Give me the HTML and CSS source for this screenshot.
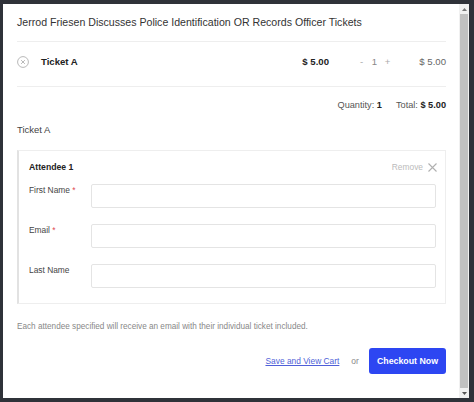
FILE: index.html
```html
<!DOCTYPE html>
<html>
<head>
<meta charset="utf-8">
<link rel="stylesheet" href="styles.css">
</head>
<body>
<div class="frame">
  <div class="modal">
    <div class="content">
      <h1 class="title">Jerrod Friesen Discusses Police Identification OR Records Officer Tickets</h1>
      <div class="ticket-row">
        <span class="rm-icon">
          <svg width="12" height="12" viewBox="0 0 12 12"><circle cx="6" cy="6" r="5.4" fill="none" stroke="#b8b8b8" stroke-width="1"/><path d="M4.1 4.1 L7.9 7.9 M7.9 4.1 L4.1 7.9" stroke="#b0b0b0" stroke-width="0.9" fill="none"/></svg>
        </span>
        <span class="name">Ticket A</span>
        <span class="price">$ 5.00</span>
        <span class="qty"><span class="qbtn">-</span><span class="qnum">1</span><span class="qbtn">+</span></span>
        <span class="sub">$ 5.00</span>
      </div>
      <div class="summary"><span>Quantity: <b>1</b></span><span>Total: <b>$ 5.00</b></span></div>
      <div class="section-title">Ticket A</div>
      <div class="attendee">
        <div class="att-head">
          <b class="att-title">Attendee 1</b>
          <span class="remove">Remove
            <svg width="9" height="9" viewBox="0 0 9 9"><path d="M0.5 0.5 L8.5 8.5 M8.5 0.5 L0.5 8.5" stroke="#b0b0b0" stroke-width="1.1" fill="none"/></svg>
          </span>
        </div>
        <div class="field"><label class="lbl">First Name <span class="req">*</span></label><input class="inp" type="text"></div>
        <div class="field"><label class="lbl">Email <span class="req">*</span></label><input class="inp" type="text"></div>
        <div class="field"><label class="lbl">Last Name</label><input class="inp" type="text"></div>
      </div>
      <p class="note">Each attendee specified will receive an email with their individual ticket included.</p>
      <div class="actions">
        <a class="cart-link" href="#">Save and View Cart</a>
        <span class="or">or</span>
        <button class="checkout">Checkout Now</button>
      </div>
    </div>
    <div class="scrollbar">
      <div class="sb-arrow"><svg width="5" height="3" viewBox="0 0 5 3"><path d="M0 3 L2.5 0 L5 3 Z" fill="#777"/></svg></div>
      <div class="sb-thumb"></div>
      <div class="sb-arrow"><svg width="5" height="3" viewBox="0 0 5 3"><path d="M0 0 L2.5 3 L5 0 Z" fill="#555"/></svg></div>
    </div>
  </div>
</div>
</body>
</html>
```

FILE: styles.css
```css
* { box-sizing: border-box; }
html, body { margin: 0; padding: 0; }
body {
  background: #2f3239;
  font-family: "Liberation Sans", Arial, sans-serif;
  color: #333;
}
.frame {
  height: 402px;
  padding: 4px 5px 4px 3px;
}
.modal {
  display: flex;
  height: 394px;
  background: #fff;
}
.content {
  flex: 1;
  padding: 10px 13px 0 14px;
}
.title {
  margin: 0 0 11px;
  font-size: 10.6px;
  line-height: 16px;
  font-weight: normal;
  color: #333;
}
.ticket-row {
  display: flex;
  align-items: center;
  border-top: 1px solid #eee;
  border-bottom: 1px solid #eee;
  padding: 12px 0 16px;
  font-size: 9.6px;
  line-height: 16px;
}
.rm-icon {
  width: 24px;
  display: flex;
  align-items: center;
}
.name {
  flex: 1;
  font-weight: bold;
  color: #222;
}
.price {
  font-weight: bold;
  color: #222;
}
.qty {
  display: flex;
  margin-left: 26px;
  color: #999;
}
.qty span {
  width: 13px;
  text-align: center;
}
.qbtn { color: #aaa; }
.qnum { color: #888; }
.sub {
  width: 52px;
  text-align: right;
  color: #666;
}
.summary {
  display: flex;
  justify-content: flex-end;
  gap: 14px;
  margin-top: 11px;
  font-size: 9.2px;
  line-height: 14px;
  color: #555;
}
.summary b { color: #222; }
.section-title {
  margin-top: 11px;
  font-size: 9.5px;
  line-height: 14px;
  color: #444;
}
.attendee {
  margin-top: 13px;
  border: 1px solid #eee;
  border-left: 2px solid #e2e2e2;
  padding: 9px 9px 15px 10px;
}
.att-head {
  display: flex;
  justify-content: space-between;
  align-items: center;
  line-height: 14px;
  margin-bottom: 10px;
}
.att-title {
  font-size: 8.7px;
  color: #222;
}
.remove {
  display: flex;
  align-items: center;
  gap: 5px;
  font-size: 8.4px;
  color: #bbb;
  margin-right: -1px;
}
.field {
  display: flex;
  align-items: flex-start;
  margin-bottom: 16px;
}
.field:last-child { margin-bottom: 0; }
.lbl {
  width: 62px;
  font-size: 8.4px;
  line-height: 13px;
  color: #444;
}
.req { color: #e0474c; }
.inp {
  flex: 1;
  height: 24px;
  border: 1px solid #e4e4e4;
  border-radius: 2px;
  background: #fff;
  margin: 0;
  padding: 0 6px;
  outline: none;
}
.note {
  margin: 17px 0 0;
  font-size: 8.2px;
  line-height: 12px;
  color: #888;
}
.actions {
  display: flex;
  justify-content: flex-end;
  align-items: center;
  margin-top: 15px;
}
.cart-link {
  font-size: 8.4px;
  color: #4f5fd8;
  text-decoration: underline;
}
.or {
  font-size: 8.5px;
  color: #888;
  margin: 0 10px 0 12px;
}
.checkout {
  height: 26px;
  padding: 0 8px;
  border: none;
  border-radius: 3px;
  background: #2d46f2;
  color: #fff;
  font-family: "Liberation Sans", Arial, sans-serif;
  font-size: 8.8px;
  font-weight: bold;
}
.scrollbar {
  width: 10px;
  background: #f1f1f1;
  display: flex;
  flex-direction: column;
  align-items: center;
}
.sb-arrow {
  height: 10px;
  display: flex;
  align-items: center;
  justify-content: center;
}
.sb-thumb {
  flex: 1;
  width: 8px;
  background: #c1c1c1;
}
```
